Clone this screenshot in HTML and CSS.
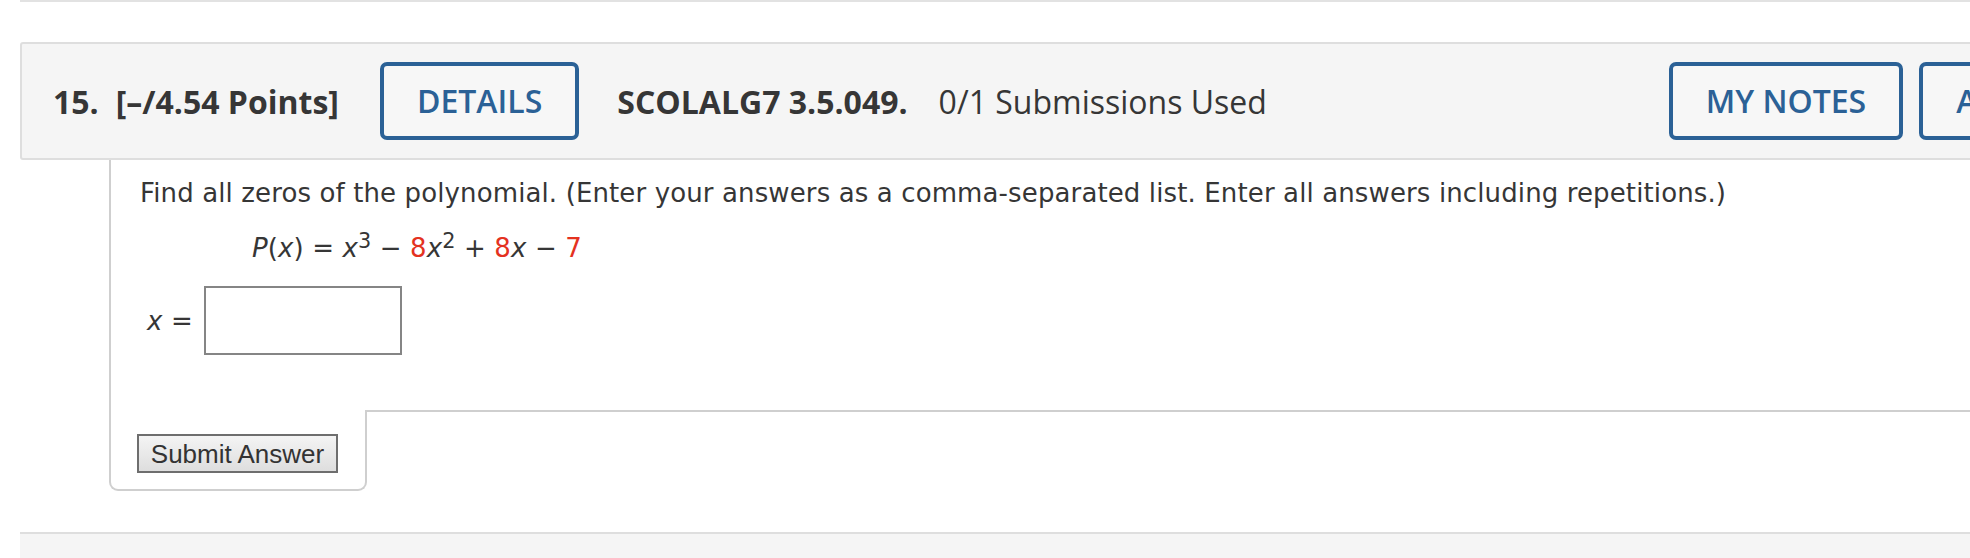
FILE: index.html
```html
<!DOCTYPE html>
<html lang="en">
<head>
<meta charset="utf-8">
<title>Question 15</title>
<link rel="stylesheet" href="styles.css">
</head>
<body>
<div class="page">
  <div class="prev-end"></div>
  <div class="q-header">
    <span class="q-num">15.</span>
    <span class="q-points">[–/4.54 Points]</span>
    <button class="hbtn details">DETAILS</button>
    <span class="q-code">SCOLALG7 3.5.049.</span>
    <span class="q-subs">0/1 Submissions Used</span>
    <span class="spacer"></span>
    <button class="hbtn notes">MY NOTES</button>
    <button class="hbtn ask">ASK YOUR TEACHER</button>
  </div>
  <div class="q-body">
    <p class="prompt">Find all zeros of the polynomial. (Enter your answers as a comma-separated list. Enter all answers including repetitions.)</p>
    <p class="equation"><i>P</i>(<i>x</i>) = <i>x</i><sup>3</sup> − <span class="red">8</span><i>x</i><sup>2</sup> + <span class="red">8</span><i>x</i> − <span class="red">7</span></p>
    <div class="answer-row">
      <span class="answer-label"><i>x</i> =</span>
      <input class="answer-input" type="text" aria-label="answer">
    </div>
  </div>
  <div class="submit-tab">
    <button class="submit-btn">Submit Answer</button>
  </div>
  <div class="next-q"></div>
</div>
</body>
</html>
```
FILE: styles.css
```css
html, body {
  margin: 0;
  padding: 0;
  background: #ffffff;
}
body {
  width: 1970px;
  height: 558px;
  overflow: hidden;
}
.page {
  width: 1970px;
}
.prev-end {
  margin-left: 20px;
  border-bottom: 2px solid #e2e2e2;
  height: 0;
}
.q-header {
  margin-top: 40px;
  margin-left: 20px;
  width: 2284px;
  height: 114px;
  box-sizing: content-box;
  border: 2px solid #dedede;
  border-radius: 3px;
  background: #f5f5f5;
  display: flex;
  align-items: center;
  padding-left: 31px;
  font-family: "Open Sans", "Liberation Sans", sans-serif;
  font-size: 32px;
  color: #363636;
}
.q-num {
  font-weight: 700;
}
.q-points {
  font-weight: 700;
  margin-left: 17px;
}
.hbtn {
  font-family: "Open Sans", "Liberation Sans", sans-serif;
  font-size: 32px;
  font-weight: 600;
  color: #2b6196;
  background: #f7f7f7;
  border: 4px solid #2b6196;
  border-radius: 7px;
  height: 78px;
  padding: 0 33px;
  line-height: 1;
  margin: 0;
}
.details {
  margin-left: 41px;
}
.q-code {
  font-weight: 700;
  margin-left: 38px;
}
.q-subs {
  margin-left: 31px;
}
.spacer {
  flex: 1;
}
.notes {
  margin-right: 16px;
}
.ask {
  margin-right: 40px;
}
.q-body {
  margin-left: 109px;
  border-left: 2px solid #cfcfcf;
  border-bottom: 2px solid #cfcfcf;
  padding: 16px 0 55px 29px;
  font-family: "DejaVu Sans", Verdana, sans-serif;
  font-size: 26px;
  line-height: 34px;
  letter-spacing: 0.12px;
  color: #363636;
}
.prompt {
  margin: 0;
  white-space: nowrap;
}
.equation {
  margin: 21px 0 0 112px;
  white-space: nowrap;
}
.equation sup {
  font-size: 0.8em;
  line-height: 0;
  vertical-align: 0.45em;
}
.red {
  color: #e4321f;
}
.answer-row {
  margin-top: 21px;
  display: flex;
  align-items: center;
}
.answer-label {
  margin-left: 7px;
  width: 57px;
}
.answer-input {
  width: 194px;
  height: 65px;
  box-sizing: content-box;
  padding: 0;
  border: 2px solid #858585;
  background: #ffffff;
  margin: 0;
}
.submit-tab {
  margin-left: 109px;
  margin-top: -2px;
  width: 254px;
  height: 79px;
  box-sizing: content-box;
  border: 2px solid #cfcfcf;
  border-top: none;
  border-radius: 0 0 9px 9px;
  background: #ffffff;
}
.submit-btn {
  margin: 24px 0 0 26px;
  width: 201px;
  height: 39px;
  border: 2px solid #6e6e6e;
  background: linear-gradient(#f4f4f4, #dedede);
  font-family: "Liberation Sans", Arial, sans-serif;
  font-size: 26px;
  color: #333333;
  padding: 0;
  line-height: 1;
}
.next-q {
  margin-top: 41px;
  margin-left: 20px;
  height: 40px;
  border-top: 2px solid #dedede;
  background: #f5f5f5;
}
```
